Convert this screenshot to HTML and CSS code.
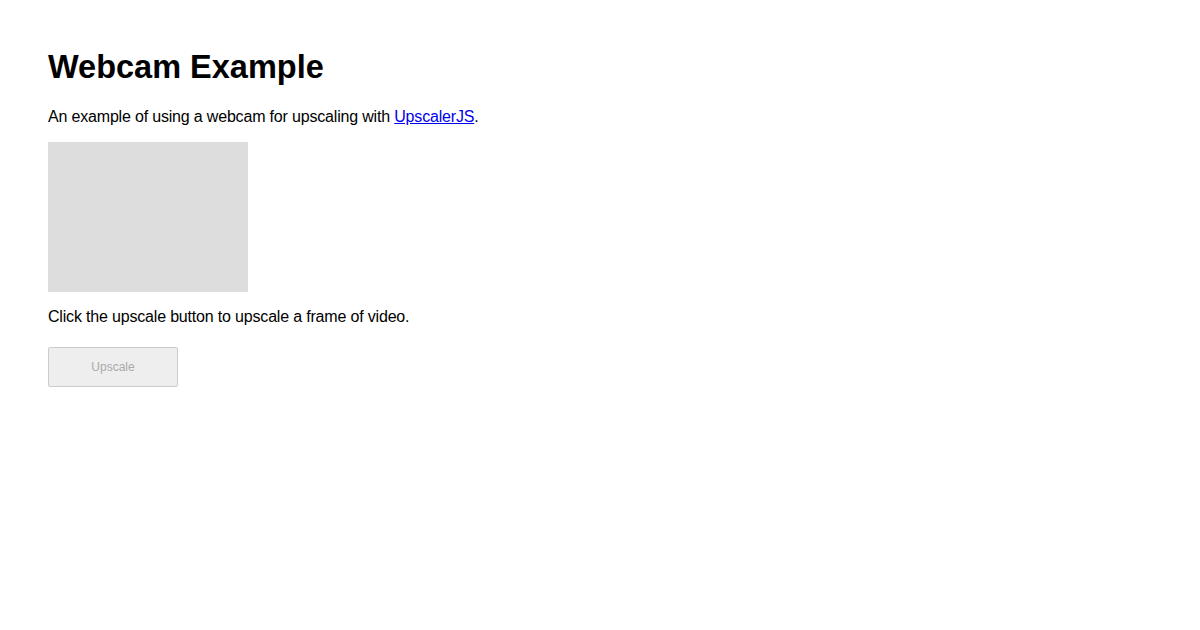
FILE: index.html
```html
<!DOCTYPE html>
<html lang="en">
<head>
    <meta charset="UTF-8">
    <title>Webcam Example</title>
    <link rel="stylesheet" href="styles.css">
</head>
<body>
    <main class="page">
        <h1>Webcam Example</h1>
        <p>An example of using a webcam for upscaling with <a href="#">UpscalerJS</a>.</p>

        <div class="video"></div>

        <p>Click the upscale button to upscale a frame of video.</p>

        <div class="acciones">
            <button class="boton" disabled>Upscale</button>
        </div>
    </main>
</body>
</html>
```

FILE: styles.css
```css
body {
    margin: 0;
    background: #fff;
    color: #000;
    font-family: 'Liberation Sans', Arial, sans-serif;
}

.page {
    padding: 49px 48px;
}

h1 {
    font-size: 32.5px;
    margin: 0 0 22px;
}

p {
    font-size: 16px;
    letter-spacing: -0.18px;
    margin: 0;
}

a {
    color: #0000ee;
}

.video {
    width: 200px;
    height: 150px;
    background: #ddd;
    margin: 16px 0;
}

.acciones {
    margin-top: 21px;
}

.boton {
    width: 130px;
    height: 40px;
    background: #eee;
    border: 1px solid #ccc;
    border-radius: 2px;
    color: #aaa;
    font-family: 'Liberation Sans', Arial, sans-serif;
    font-size: 12px;
}
```
